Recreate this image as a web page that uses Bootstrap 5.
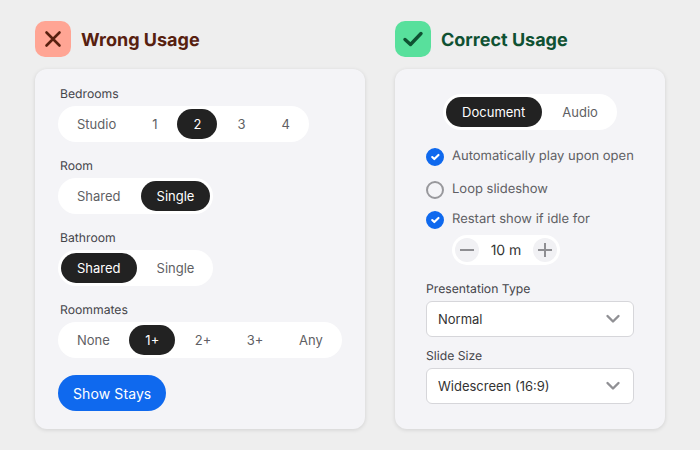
<!DOCTYPE html>
<html lang="en">
  <head>
    <meta charset="UTF-8" />
    <title>Wrong and correct usage</title>
    <link href="https://cdn.jsdelivr.net/npm/bootstrap@5.3.2/dist/css/bootstrap.min.css" rel="stylesheet" />
    <style>
      body {
        font-family: Inter, "Liberation Sans", sans-serif;
        background: #eeeeee;
        font-size: 13px;
        color: #5f5f64;
        text-rendering: geometricPrecision;
      }
      .stage {
        width: 700px;
        height: 450px;
        padding: 21px 35px 0;
        gap: 30px;
      }
      .col-wrong {
        width: 330px;
      }
      .col-right {
        width: 270px;
      }
      .head-row {
        gap: 10px;
        height: 36px;
      }
      .head-icon {
        width: 36px;
        height: 36px;
        border-radius: 10px;
      }
      .head-title {
        font-size: 18px;
        font-weight: 700;
        margin: 4px 0 0;
        line-height: 36px;
      }
      .wrong-icon { background: #ffa594; }
      .wrong-title { color: #57200f; }
      .right-icon { background: #58e09c; }
      .right-title { color: #0f5132; }
      .panel {
        margin-top: 12px;
        background: #f4f4f7;
        border: 0;
        border-radius: 12px;
        box-shadow: 0 1px 4px rgba(0, 0, 0, 0.12);
      }
      .panel-wrong {
        height: 360px;
        padding: 17px 23px;
      }
      .panel-right {
        height: 360px;
        padding: 25px 31px;
      }
      .field-label {
        font-size: 12.2px;
        line-height: 16px;
        color: #45454a;
        margin: 0 0 4px 2px;
      }
      .seg {
        height: 36px;
        padding: 3px;
        background: #fff;
        gap: 4px;
      }
      .seg-tight {
        gap: 3.5px;
      }
      .seg .btn {
        height: 30px;
        padding: 0 16px;
        border: 0;
        font-size: 13px;
        line-height: 30px;
        color: #5f5f64;
      }
      .seg .btn.active {
        background: #222222;
        color: #fff;
      }
      .seg-top {
        margin-bottom: 18px;
      }
      .seg-top .btn {
        padding: 0 16.5px;
      }
      .stay-btn {
        height: 36px;
        padding: 0 15px;
        margin-top: 1px;
        background: #0f69ee;
        border: 0;
        font-size: 14px;
        letter-spacing: 0.1px;
      }
      .opt-row {
        gap: 8px;
        margin: 0;
        padding: 0;
        min-height: 18px;
        font-size: 13px;
      }
      .opt-loop {
        margin-top: 15px;
      }
      .opt-idle {
        margin-top: 12px;
      }
      .opt-row .form-check-input {
        width: 18px;
        height: 18px;
        margin: 0;
        float: none;
        border-radius: 50%;
        background-color: transparent;
        border: 2px solid #98989c;
      }
      .opt-row .form-check-input:checked {
        background-color: #0f69ee;
        border-color: #0f69ee;
      }
      .stepper {
        width: 108px;
        height: 30px;
        padding: 3px;
        background: #fff;
        margin: 6px 0 0 26px;
        color: #333;
        font-size: 14px;
        flex-shrink: 0;
      }
      .step-btn {
        width: 24px;
        height: 24px;
        padding: 0;
        border: 0;
        border-radius: 50%;
        background: #f1f1f4;
      }
      .type-label {
        margin: 16px 0 4px;
      }
      .size-label {
        margin: 11px 0 4px;
      }
      .panel-select {
        height: 36px;
        flex-shrink: 0;
        padding: 1px 36px 0 11px;
        font-size: 13px;
        color: #333;
        border: 1px solid #d6d6da;
        border-radius: 6px;
        background-position: right 12px center;
        background-size: 16px 16px;
        background-image: url("data:image/svg+xml,%3csvg xmlns='http://www.w3.org/2000/svg' viewBox='0 0 16 16'%3e%3cpath fill='none' stroke='%23909094' stroke-width='2.4' stroke-linecap='round' stroke-linejoin='round' d='M2.5 5l5.5 5.5L13.5 5'/%3e%3c/svg%3e");
      }
    </style>
  </head>
  <body>
    <div class="stage d-flex">
      <div class="col-wrong">
        <div class="head-row d-flex align-items-center">
          <div class="head-icon wrong-icon d-flex align-items-center justify-content-center flex-shrink-0">
            <svg width="20" height="20" viewBox="0 0 20 20"><path d="M3.5 3.5l13 13M16.5 3.5l-13 13" stroke="#57200f" stroke-width="2.6" stroke-linecap="round" fill="none" /></svg>
          </div>
          <h2 class="head-title wrong-title">Wrong Usage</h2>
        </div>
        <div class="panel panel-wrong card">
          <div class="field-label">Bedrooms</div>
          <div class="seg d-inline-flex rounded-pill align-self-start mb-3">
            <button class="btn rounded-pill">Studio</button>
            <button class="btn rounded-pill">1</button>
            <button class="btn rounded-pill active">2</button>
            <button class="btn rounded-pill">3</button>
            <button class="btn rounded-pill">4</button>
          </div>
          <div class="field-label">Room</div>
          <div class="seg d-inline-flex rounded-pill align-self-start mb-3">
            <button class="btn rounded-pill">Shared</button>
            <button class="btn rounded-pill active">Single</button>
          </div>
          <div class="field-label">Bathroom</div>
          <div class="seg d-inline-flex rounded-pill align-self-start mb-3">
            <button class="btn rounded-pill active">Shared</button>
            <button class="btn rounded-pill">Single</button>
          </div>
          <div class="field-label">Roommates</div>
          <div class="seg seg-tight d-inline-flex rounded-pill align-self-start mb-3">
            <button class="btn rounded-pill">None</button>
            <button class="btn rounded-pill active">1+</button>
            <button class="btn rounded-pill">2+</button>
            <button class="btn rounded-pill">3+</button>
            <button class="btn rounded-pill">Any</button>
          </div>
          <button class="btn btn-primary stay-btn rounded-pill align-self-start">Show Stays</button>
        </div>
      </div>

      <div class="col-right">
        <div class="head-row d-flex align-items-center">
          <div class="head-icon right-icon d-flex align-items-center justify-content-center flex-shrink-0">
            <svg width="22" height="22" viewBox="0 0 22 22"><path d="M3 11.5l5.5 5L19 5.5" stroke="#0f5132" stroke-width="3.4" stroke-linecap="round" stroke-linejoin="round" fill="none" /></svg>
          </div>
          <h2 class="head-title right-title">Correct Usage</h2>
        </div>
        <div class="panel panel-right card">
          <div class="seg seg-top d-inline-flex rounded-pill align-self-center">
            <button class="btn rounded-pill active">Document</button>
            <button class="btn rounded-pill">Audio</button>
          </div>
          <label class="form-check opt-row d-flex align-items-center">
            <input class="form-check-input" type="checkbox" checked />
            <span>Automatically play upon open</span>
          </label>
          <label class="form-check opt-row opt-loop d-flex align-items-center">
            <input class="form-check-input" type="checkbox" />
            <span>Loop slideshow</span>
          </label>
          <label class="form-check opt-row opt-idle d-flex align-items-center">
            <input class="form-check-input" type="checkbox" checked />
            <span>Restart show if idle for</span>
          </label>
          <div class="stepper d-flex align-items-center justify-content-between rounded-pill">
            <button class="step-btn d-flex align-items-center justify-content-center">
              <svg width="16" height="16" viewBox="0 0 16 16"><path d="M1 8h14" stroke="#8e8e92" stroke-width="2" fill="none" /></svg>
            </button>
            <span>10 m</span>
            <button class="step-btn d-flex align-items-center justify-content-center">
              <svg width="16" height="16" viewBox="0 0 16 16"><path d="M1 8h14M8 1v14" stroke="#8e8e92" stroke-width="2" fill="none" /></svg>
            </button>
          </div>
          <div class="field-label type-label">Presentation Type</div>
          <select class="form-select panel-select">
            <option>Normal</option>
          </select>
          <div class="field-label size-label">Slide Size</div>
          <select class="form-select panel-select">
            <option>Widescreen (16:9)</option>
          </select>
        </div>
      </div>
    </div>
    <script src="https://cdn.jsdelivr.net/npm/bootstrap@5.3.2/dist/js/bootstrap.bundle.min.js"></script>
  </body>
</html>
